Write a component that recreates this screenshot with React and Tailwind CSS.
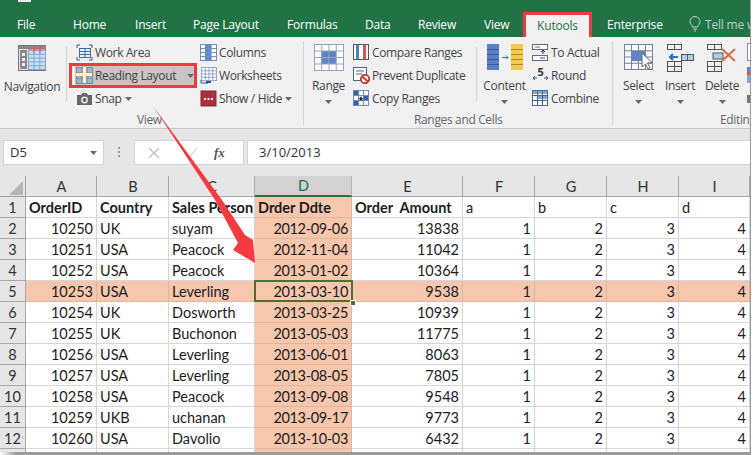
import React from "react";

const ui = "font-['Open_Sans','Noto_Sans',sans-serif]";
const cellFont = "font-['Lato','Liberation_Sans',sans-serif]";

const Caret = ({ className = "" }) => (
  <svg width="7" height="4" viewBox="0 0 7 4" className={className}>
    <path d="M0 0h7L3.500 4z" fill="#6a6a6a" />
  </svg>
);

const GridLines = ({ x, y, w, h, cols, rows, color = "#7a8ca8" }) => (
  <g stroke={color} fill="none" strokeWidth="1">
    <rect x={x + 0.5} y={y + 0.5} width={w} height={h} />
    {Array.from({ length: cols - 1 }, (_, i) => (
      <path key={"c" + i} d={`M${x + 0.5 + ((i + 1) * w) / cols} ${y}v${h}`} />
    ))}
    {Array.from({ length: rows - 1 }, (_, i) => (
      <path key={"r" + i} d={`M${x} ${y + 0.5 + ((i + 1) * h) / rows}h${w}`} />
    ))}
  </g>
);

const S = ({ children }) => (
  <svg width="17" height="17" viewBox="0 0 17 17" className="shrink-0">{children}</svg>
);

const icons = {
  work: (
    <S>
      <path d="M1 4V1h3M13 1h3v3M16 13v3h-3M4 16H1v-3" stroke="#3c5a78" fill="none" />
      <GridLines x={3} y={4} w={11} h={9} cols={2} rows={3} color="#3b6ea5" />
    </S>
  ),
  reading: (
    <S>
      <rect x="0" y="0" width="17" height="17" fill="#a9b4c6" />
      <GridLines x={0} y={0} w={16} h={16} cols={3} rows={3} color="#7f8da3" />
      <rect x="0" y="6" width="16" height="3" fill="#fbf0c4" />
      <rect x="7" y="0" width="3" height="16" fill="#fbf0c4" />
    </S>
  ),
  snap: (
    <S>
      <path d="M1 5h4l1.500-2h4L12 5h4v10H1z" fill="#666" />
      <circle cx="8.500" cy="10" r="3.400" fill="#f1f1f1" />
      <circle cx="8.500" cy="10" r="2" fill="#666" />
    </S>
  ),
  columns: (
    <S>
      <rect x="0" y="0" width="16" height="16" fill="#fff" />
      <rect x="5" y="0" width="6" height="16" fill="#5b8bd0" />
      <GridLines x={0} y={0} w={16} h={16} cols={3} rows={4} color="#6f8fbc" />
    </S>
  ),
  sheets: (
    <S>
      <rect x="1" y="0" width="15" height="13" fill="#fff" />
      <GridLines x={1} y={0} w={15} h={13} cols={4} rows={4} color="#92a9c8" />
      <path d="M1 13v3h7l1-2" stroke="#2a5699" fill="none" />
      <rect x="6" y="14" width="5" height="2" fill="#2a5699" />
    </S>
  ),
  show: (
    <S>
      <rect x="1" y="1" width="15" height="15" fill="#a8313c" stroke="#8b2630" />
      <rect x="4" y="8" width="2" height="2" fill="#fff" />
      <rect x="7.500" y="8" width="2" height="2" fill="#fff" />
      <rect x="11" y="8" width="2" height="2" fill="#fff" />
    </S>
  ),
  compare: (
    <S>
      <rect x="0.500" y="0.500" width="15" height="15" fill="#fff" stroke="#555" />
      <rect x="3" y="1" width="3" height="14" fill="#4f81c7" />
      <rect x="10" y="1" width="3" height="14" fill="#d9534f" />
    </S>
  ),
  prevent: (
    <S>
      <rect x="0.500" y="0.500" width="13" height="13" fill="#fff" stroke="#48688c" />
      <path d="M3 4h8M3 7h6" stroke="#48688c" />
      <circle cx="12" cy="12" r="4.200" fill="#fff" stroke="#c0392b" strokeWidth="1.800" />
      <path d="M9.200 9.500l5.600 5" stroke="#c0392b" strokeWidth="1.800" />
    </S>
  ),
  copy: (
    <S>
      <rect x="0" y="0" width="16" height="16" fill="#fff" />
      <rect x="0" y="0" width="5" height="5" fill="#2f62b3" />
      <rect x="10" y="5" width="5" height="5" fill="#2f62b3" />
      <rect x="0" y="10" width="5" height="5" fill="#2f62b3" />
      <GridLines x={0} y={0} w={15} h={15} cols={3} rows={3} color="#6d8cb8" />
      <path d="M7 8l1-2 1 2 2 0-2 1 1 2-2-1-2 1 1-2-2-1z" fill="#222" />
    </S>
  ),
  actual: (
    <S>
      <rect x="0.500" y="0.500" width="15" height="5" fill="#fff" stroke="#667" />
      <path d="M3 3h5" stroke="#c0392b" />
      <rect x="0.500" y="11.500" width="15" height="5" fill="#fff" stroke="#667" />
      <path d="M8 14h5" stroke="#2a5699" />
      <path d="M11 10V7M9 8l2-2 2 2" stroke="#333" fill="none" />
    </S>
  ),
  round: (
    <S>
      <path d="M1 11h4M12 11h4" stroke="#2a5699" />
      <path d="M3 9l-2 2 2 2M14 9l2 2-2 2" stroke="#2a5699" fill="none" />
      <text x="5.500" y="9" fontSize="11" fontWeight="700" fill="#333" fontFamily="Open Sans">5</text>
    </S>
  ),
  combine: (
    <S>
      <rect x="0" y="0" width="16" height="16" fill="#fff" />
      <rect x="5" y="5" width="11" height="4" fill="#7fa7d9" />
      <rect x="0" y="0" width="16" height="4" fill="#8aa7cf" />
      <GridLines x={0} y={0} w={15} h={15} cols={3} rows={3} color="#48688c" />
    </S>
  ),
};

const Small = ({ icon, label, caret, className = "", caretClass = "ml-[3px]" }) => (
  <div className={`flex h-[23px] items-center ${className}`}>
    {icons[icon]}
    <span className="ml-[2px] whitespace-nowrap">{label}</span>
    {caret && <Caret className={caretClass} />}
  </div>
);

const Big = ({ label, width, children, caret = true }) => (
  <div className={`flex flex-col items-center pt-[5px] ${width}`}>
    <div className="flex h-[31px] items-center justify-center">{children}</div>
    <span className="mt-[4px] leading-[18px] whitespace-nowrap">{label}</span>
    {caret && <Caret className="mt-[5px]" />}
  </div>
);

const NavIcon = () => (
  <svg width="29" height="26" viewBox="0 0 29 26">
    <rect x="0.500" y="0.500" width="27" height="25" fill="#e4e4e4" stroke="#777" />
    <rect x="1" y="1" width="27" height="3" fill="#888" />
    <rect x="2" y="5" width="7" height="19" fill="#888" />
    <rect x="4" y="8" width="3" height="3" fill="#eee" />
    <rect x="4" y="13" width="3" height="3" fill="#eee" />
    <rect x="4" y="18" width="3" height="3" fill="#eee" />
    <rect x="10" y="5" width="17" height="19" fill="#cfe0f2" />
    <GridLines x={10} y={5} w={17} h={19} cols={3} rows={5} color="#7ea6d3" />
    <path d="M16 1v7M22 1v7" stroke="#d9534f" />
    <path d="M10 4h17" stroke="#d9534f" />
  </svg>
);

const RangeIcon = () => (
  <svg width="30" height="27" viewBox="0 0 30 27">
    <rect x="0" y="0" width="29" height="26" fill="#fff" />
    <rect x="7" y="7" width="15" height="13" fill="#5d83c9" />
    <GridLines x={0} y={0} w={29} h={26} cols={4} rows={4} color="#93a5bf" />
  </svg>
);

const ContentIcon = () => (
  <svg width="36" height="27" viewBox="0 0 36 27">
    <rect x="0" y="0" width="12" height="26" fill="#5b7fc7" />
    <rect x="24" y="0" width="12" height="26" fill="#f2c94c" />
    <g stroke="#3c5a99">
      <path d="M0 5.500h12M0 10.500h12M0 15.500h12M0 20.500h12" />
    </g>
    <g stroke="#b08a28">
      <path d="M24 5.500h12M24 10.500h12M24 15.500h12M24 20.500h12" />
    </g>
    <path d="M15 13.500h6M19 11.500l2 2-2 2" stroke="#2a7ab8" fill="none" />
  </svg>
);

const SelectIcon = () => (
  <svg width="30" height="27" viewBox="0 0 30 27">
    <rect x="0" y="0" width="29" height="25" fill="#f6f8fb" />
    <rect x="7" y="7" width="15" height="10" fill="#5d83d8" />
    <GridLines x={0} y={0} w={28} h={25} cols={4} rows={4} color="#72839b" />
    <path d="M18 9v14l3.500-3 2.500 5 2-1-2.500-5 4.500-.5z" fill="#fff" stroke="#666" />
  </svg>
);

const InsertIcon = () => (
  <svg width="27" height="28" viewBox="0 0 27 28">
    <GridLines x={0} y={0} w={14} h={5} cols={2} rows={1} color="#555" />
    <rect x="14" y="10" width="12" height="6" fill="#b7cbe3" />
    <GridLines x={14} y={10} w={12} h={6} cols={2} rows={1} color="#556" />
    <path d="M11 13H3M6 10l-3 3 3 3" stroke="#2a6fc0" strokeWidth="2" fill="none" />
    <GridLines x={0} y={17} w={14} h={10} cols={2} rows={2} color="#555" />
  </svg>
);

const DeleteIcon = () => (
  <svg width="30" height="28" viewBox="0 0 30 28">
    <GridLines x={0} y={0} w={14} h={5} cols={2} rows={1} color="#555" />
    <rect x="6" y="9" width="10" height="6" fill="#b7cbe3" stroke="#556" />
    <GridLines x={0} y={17} w={14} h={10} cols={2} rows={2} color="#555" />
    <path d="M15 5l13 12M28 5L15 17" stroke="#d9694a" strokeWidth="2" />
  </svg>
);

const tabs = [
  ["File", "w-[73px] pl-[17px]"],
  ["Home", "w-[62px]"],
  ["Insert", "w-[58px]"],
  ["Page Layout", "w-[94px]"],
  ["Formulas", "w-[78px]"],
  ["Data", "w-[53px]"],
  ["Review", "w-[66px]"],
  ["View", "w-[39px]"],
];

const GroupSep = () => <div className="mb-[3px] mt-[4px] w-px shrink-0 bg-[#d4d4d4]" />;

const Ribbon = () => (
  <div className={`${ui} text-[12px] tracking-[-0.35px] text-[#444]`}>
    <div className="relative h-[37px] bg-[#217346] tracking-[-0.2px] text-white">
      <div className="absolute left-[18px] top-0 h-[2px] w-[13px] bg-[#f1f1f1]" />
      <div className="flex h-full items-start pt-[16px]">
        {tabs.map(([t, w]) => (
          <span key={t} className={`${w} shrink-0 leading-[18px]`}>{t}</span>
        ))}
        <span className="-mt-[4px] flex h-[25px] w-[69px] shrink-0 items-center justify-center border-[3px] border-b-0 border-[#f03a3f] bg-[#f1f1f1] text-[#217346]">
          Kutools
        </span>
        <span className="ml-[15px] w-[82px] shrink-0 leading-[18px]">Enterprise</span>
        <svg width="12" height="16" viewBox="0 0 12 16" className="mr-[4px] shrink-0">
          <path d="M3.500 11C3 8.500 1 8 1 5.500a5 5 0 0 1 10 0C11 8 9 8.500 8.500 11zM4 13h4M5 15h2" stroke="#b8d3c4" fill="none" />
        </svg>
        <span className="whitespace-nowrap leading-[18px] text-[#b8d3c4]">Tell me w</span>
      </div>
    </div>
    <div className="flex h-[92px] overflow-hidden border-b border-[#c6c6c6] bg-[#f1f1f1]">
      <div className="flex w-[303px] shrink-0 flex-col">
        <div className="flex h-[76px]">
          <div className="w-[66px] shrink-0 pl-[3px]">
            <div className="flex w-[58px] flex-col items-center pt-[8px]">
              <NavIcon />
              <span className="mt-[7px] leading-[18px]">Navigation</span>
            </div>
          </div>
          <div className="mt-[10px] h-[54px] w-px shrink-0 bg-[#d4d4d4]" />
          <div className="w-[133px] shrink-0 pl-[8px] pt-[4px]">
            <Small icon="work" label="Work Area" className="pl-[1px]" />
            <div className="relative">
              <Small icon="reading" label="Reading Layout" caret caretClass="ml-[11px]" className="w-[122px] bg-[#c6c6c6] pl-[1px]" />
              <div className="absolute -left-[6px] -top-[1px] h-[25px] w-[128px] border-[3px] border-[#f03a3f]" />
            </div>
            <Small icon="snap" label="Snap" caret className="pl-[1px]" />
          </div>
          <div className="pt-[4px]">
            <Small icon="columns" label="Columns" />
            <Small icon="sheets" label="Worksheets" />
            <Small icon="show" label="Show / Hide" caret />
          </div>
        </div>
        <div className="mt-[1px] pl-[137px] leading-[16px] text-[#666]">View</div>
      </div>
      <GroupSep />
      <div className="flex w-[308px] shrink-0 flex-col">
        <div className="flex h-[76px]">
          <Big label="Range" width="w-[49px] shrink-0"><RangeIcon /></Big>
          <div className="w-[123px] shrink-0 pt-[4px]">
            <Small icon="compare" label="Compare Ranges" />
            <Small icon="prevent" label="Prevent Duplicate" />
            <Small icon="copy" label="Copy Ranges" />
          </div>
          <div className="mt-[10px] h-[54px] w-px shrink-0 bg-[#d4d4d4]" />
          <Big label="Content" width="w-[55px] shrink-0"><ContentIcon /></Big>
          <div className="pt-[4px]">
            <Small icon="actual" label="To Actual" />
            <Small icon="round" label="Round" />
            <Small icon="combine" label="Combine" />
          </div>
        </div>
        <div className="mt-[1px] pl-[110px] leading-[16px] whitespace-nowrap text-[#666]">Ranges and Cells</div>
      </div>
      <GroupSep />
      <div className="flex flex-1 flex-col">
        <div className="flex h-[76px] pl-[5px]">
          <Big label="Select" width="w-[41px] shrink-0"><SelectIcon /></Big>
          <Big label="Insert" width="w-[42px] shrink-0"><InsertIcon /></Big>
          <Big label="Delete" width="w-[42px] shrink-0"><DeleteIcon /></Big>
          <svg width="5" height="68" viewBox="0 0 5 68" className="ml-[4px] mt-[6px] shrink-0">
            <rect x="0.500" y="0.500" width="6" height="17" fill="#fff" stroke="#88a" />
            <rect x="0" y="24" width="5" height="5" fill="#5d83c9" />
            <rect x="0" y="29" width="5" height="3" fill="#d9534f" />
            <rect x="0" y="32" width="5" height="8" fill="#7fa7d9" />
            <rect x="0" y="52" width="5" height="8" fill="#777" />
          </svg>
        </div>
        <div className="mt-[1px] pl-[107px] leading-[16px] whitespace-nowrap text-[#666]">Editing</div>
      </div>
    </div>
  </div>
);

const FormulaBar = () => (
  <div className="flex h-[47px] items-start bg-[#e6e6e6] pl-[3px] pt-[11px]">
    <div className={`flex h-[25px] w-[101px] shrink-0 items-center justify-between border border-[#d4d4d4] bg-white pl-[6px] pr-[6px] text-[13px] text-[#333] ${ui}`}>
      D5
      <Caret />
    </div>
    <div className="flex w-[30px] shrink-0 justify-center pt-[7px]">
      <div className="grid gap-[2px]">
        <i className="block h-[2px] w-[2px] bg-[#9a9a9a]" />
        <i className="block h-[2px] w-[2px] bg-[#9a9a9a]" />
        <i className="block h-[2px] w-[2px] bg-[#9a9a9a]" />
      </div>
    </div>
    <div className="flex h-[25px] w-[110px] shrink-0 items-center border border-[#d4d4d4] bg-white">
      <svg width="12" height="12" viewBox="0 0 12 12" className="ml-[13px]">
        <path d="M1 1l10 10M11 1L1 11" stroke="#c4c4c4" strokeWidth="1.500" />
      </svg>
      <svg width="14" height="12" viewBox="0 0 14 12" className="ml-[24px]">
        <path d="M1 7l4 4 8-10" stroke="#e0e0e0" strokeWidth="1.500" fill="none" />
      </svg>
      <span className="ml-[16px] font-['Liberation_Serif',serif] text-[13px] font-bold italic text-[#555]">fx</span>
    </div>
    <div className={`ml-[3px] flex h-[25px] flex-1 items-center border-y border-l border-[#d4d4d4] bg-white pl-[11px] text-[13px] text-[#333] ${ui}`}>
      3/10/2013
    </div>
  </div>
);

const rows = [
  [10250, "UK", "suyam", "2012-09-06", 13838],
  [10251, "USA", "Peacock", "2012-11-04", 11042],
  [10252, "USA", "Peacock", "2013-01-02", 10364],
  [10253, "USA", "Leverling", "2013-03-10", 9538],
  [10254, "UK", "Dosworth", "2013-03-25", 10939],
  [10255, "UK", "Buchonon", "2013-05-03", 11775],
  [10256, "USA", "Leverling", "2013-06-01", 8063],
  [10257, "USA", "Leverling", "2013-08-05", 7805],
  [10258, "USA", "Peacock", "2013-09-08", 9548],
  [10259, "UKB", "uchanan", "2013-09-17", 9773],
  [10260, "USA", "Davolio", "2013-10-03", 6432],
];

const colHeads = ["A", "B", "C", "D", "E", "F", "G", "H", "I"];

const Cell = ({ children, right, bold, tone = "plain" }) => {
  const toneCls =
    tone === "hot"
      ? "bg-[#f6c6ad] border-[#e3b39b]"
      : "bg-white border-[#d6d6d6]";
  return (
    <div
      className={`relative flex items-center overflow-hidden whitespace-nowrap border-r border-b px-[3px] pt-[2px] text-[14.5px] text-[#1c1c1c] ${toneCls} ${
        right ? "justify-end" : ""
      } ${bold ? "font-bold" : ""}`}
    >
      {children}
    </div>
  );
};

const rowHead = "flex items-center justify-center border-r border-b border-[#a8a8a8] bg-[#e6e6e6] pt-[2px] text-[14.5px] text-[#333]";
const blank = "border-r border-[#d6d6d6] bg-white";

const Sheet = () => (
  <div className={`${cellFont} relative grid h-[276px] w-[750px] grid-cols-[26px_71px_72px_86px_97px_111px_72px_72px_72px_71px] auto-rows-[21px] overflow-hidden`}>
    <div className="relative border-r border-b border-[#a0a0a0] bg-[#e6e6e6]">
      <svg width="14" height="14" viewBox="0 0 14 14" className="absolute bottom-[1px] right-[2px]">
        <path d="M14 0v14H0z" fill="#b5b5b5" />
      </svg>
    </div>
    {colHeads.map((c) => (
      <div
        key={c}
        className={`flex items-center justify-center border-r pl-[1px] pt-[1px] text-[14.5px] ${
          c === "D"
            ? "border-b-2 border-b-[#217346] border-r-[#b4b4b4] bg-[#d2d2d2] text-[#217346]"
            : "border-b border-[#a8a8a8] bg-[#e6e6e6] text-[#333]"
        }`}
      >
        {c}
      </div>
    ))}

    <div className={rowHead}>1</div>
    <Cell bold>OrderID</Cell>
    <Cell bold>Country</Cell>
    <Cell bold>Sales Person</Cell>
    <Cell bold tone="hot">Drder Ddte</Cell>
    <Cell bold><span className="whitespace-pre">Order  Amount</span></Cell>
    <Cell>a</Cell>
    <Cell>b</Cell>
    <Cell>c</Cell>
    <Cell>d</Cell>

    {rows.map((r, i) => {
      const tone = i === 3 ? "hot" : "plain";
      return (
        <React.Fragment key={r[0]}>
          <div className={rowHead}>{i + 2}</div>
          <Cell right tone={tone}>{r[0]}</Cell>
          <Cell tone={tone}>{r[1]}</Cell>
          <Cell tone={tone}>{r[2]}</Cell>
          <Cell right tone="hot"><span className="tracking-[-0.35px]">{r[3]}</span></Cell>
          <Cell right tone={tone}>{r[4]}</Cell>
          <Cell right tone={tone}>1</Cell>
          <Cell right tone={tone}>2</Cell>
          <Cell right tone={tone}>3</Cell>
          <Cell right tone={tone}>4</Cell>
        </React.Fragment>
      );
    })}
    <div className="border-r border-[#a8a8a8] bg-[#e6e6e6]" />
    <div className={blank} />
    <div className={blank} />
    <div className={blank} />
    <div className="border-r border-[#e3b39b] bg-[#f6c6ad]" />
    <div className={blank} />
    <div className={blank} />
    <div className={blank} />
    <div className={blank} />
    <div className={blank} />
    <div className="absolute left-[254px] top-[104px] h-[22px] w-[99px] border-2 border-[#50702f]" />
    <div className="absolute left-[350px] top-[124px] h-[6px] w-[6px] border border-white bg-[#50702f]" />
  </div>
);

export default function App() {
  return (
    <div className="relative h-[455px] w-[753px] overflow-hidden bg-white">
      <div className="w-[751px] overflow-hidden border-r border-[#9a9a9a]">
        <Ribbon />
        <FormulaBar />
        <Sheet />
        <div className="h-[3px] bg-[linear-gradient(to_right,#ffffff,#9a9a9a_16px)]" />
      </div>
      <svg width="753" height="455" viewBox="0 0 753 455" className="pointer-events-none absolute left-0 top-0">
        <path d="M153 106L222 200L245 235L253 240L255 263L233 250L238 243L215 200Z" fill="#f53b40" />
      </svg>
    </div>
  );
}
